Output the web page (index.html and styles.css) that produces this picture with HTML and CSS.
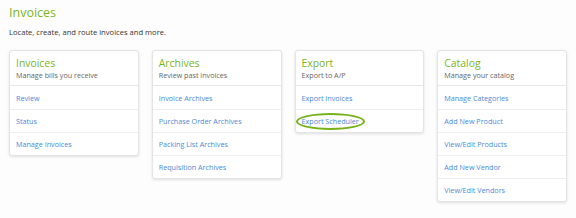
FILE: index.html
```html
<!DOCTYPE html>
<html>
<head>
<meta charset="utf-8">
<link rel="stylesheet" href="styles.css">
</head>
<body>
<div class="page">
  <h1 class="title">Invoices</h1>
  <p class="lead">Locate, create, and route invoices and more.</p>
  <div class="cards">
    <div class="card">
      <div class="card-head">
        <div class="card-title">Invoices</div>
        <div class="card-sub">Manage bills you receive</div>
      </div>
      <a class="row" href="#">Review</a>
      <a class="row" href="#">Status</a>
      <a class="row" href="#">Manage Invoices</a>
    </div>
    <div class="card">
      <div class="card-head">
        <div class="card-title">Archives</div>
        <div class="card-sub">Review past invoices</div>
      </div>
      <a class="row" href="#">Invoice Archives</a>
      <a class="row" href="#">Purchase Order Archives</a>
      <a class="row" href="#">Packing List Archives</a>
      <a class="row" href="#">Requisition Archives</a>
    </div>
    <div class="card">
      <div class="card-head">
        <div class="card-title">Export</div>
        <div class="card-sub">Export to A/P</div>
      </div>
      <a class="row" href="#">Export Invoices</a>
      <a class="row" href="#"><span class="circled">Export Scheduler</span></a>
    </div>
    <div class="card">
      <div class="card-head">
        <div class="card-title">Catalog</div>
        <div class="card-sub">Manage your catalog</div>
      </div>
      <a class="row" href="#">Manage Categories</a>
      <a class="row" href="#">Add New Product</a>
      <a class="row" href="#">View/Edit Products</a>
      <a class="row" href="#">Add New Vendor</a>
      <a class="row" href="#">View/Edit Vendors</a>
    </div>
  </div>
</div>
</body>
</html>
```
FILE: styles.css
```css
html, body {
  margin: 0;
  padding: 0;
  background: #fdfdfd;
}
body {
  font-family: "Open Sans", "Liberation Sans", sans-serif;
  width: 576px;
  height: 218px;
  overflow: hidden;
}
.page {
  padding: 4px 9px 0 9px;
}
.title {
  margin: 0;
  font-size: 12.5px;
  font-weight: 400;
  color: #7ab51d;
  line-height: 18px;
}
.lead {
  margin: 0;
  padding-top: 3px;
  font-size: 7.6px;
  color: #333;
  line-height: 14px;
}
.cards {
  display: flex;
  align-items: flex-start;
  gap: 13px;
  margin-top: 11px;
}
.card {
  width: 130px;
  background: #fff;
  border: 1px solid #e4e4e4;
  border-radius: 3px;
  box-shadow: 0 1px 3px rgba(0,0,0,0.12);
  box-sizing: border-box;
}
.card-head {
  height: 35px;
  box-sizing: border-box;
  padding: 6px 6px 0 6px;
  border-bottom: 1px solid #e6e6e6;
}
.card-title {
  font-size: 10.4px;
  color: #7ab51d;
  line-height: 13px;
}
.card-sub {
  font-size: 7.2px;
  color: #666;
  line-height: 11px;
}
.row {
  display: flex;
  align-items: center;
  height: 23px;
  box-sizing: border-box;
  padding: 0 6px;
  font-size: 7.2px;
  color: #4a8ad8;
  text-decoration: none;
  border-top: 1px solid #eeeeee;
}
.card-head + .row {
  border-top: none;
}
.circled {
  position: relative;
}
.circled::after {
  content: "";
  position: absolute;
  left: -6px;
  right: -6px;
  top: -3px;
  bottom: -4px;
  border: 2px solid #76b21a;
  border-radius: 50%;
}
```
